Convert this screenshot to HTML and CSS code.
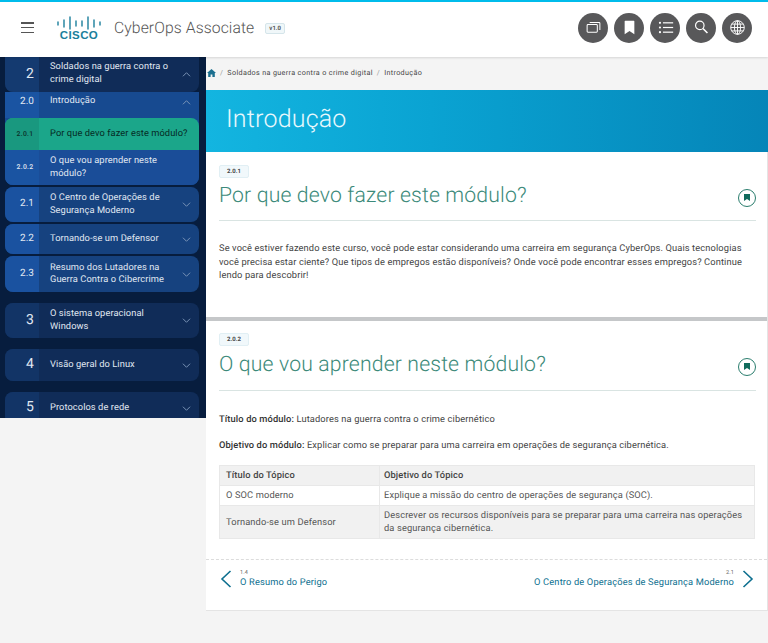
FILE: index.html
```html
<!DOCTYPE html>
<html lang="pt">
<head>
<meta charset="utf-8">
<title>CyberOps Associate</title>
<link rel="stylesheet" href="styles.css">
</head>
<body>
<header class="topbar">
  <button class="burger" aria-label="Menu"><span></span><span></span><span></span></button>
  <div class="logo">
    <svg class="logo-bars" width="44" height="14" viewBox="0 0 44 14"><g stroke="#1b7f9c" stroke-width="1.4" stroke-linecap="round"><path d="M1 6v3M7 4v7M13 1v12M19 5v5M25 5v5M31 1v12M37 4v7M43 6v3"/></g></svg>
    <span class="logo-text">CISCO</span>
  </div>
  <div class="course">CyberOps Associate</div>
  <span class="version">v1.0</span>
  <nav class="tools">
    <a class="tool"><svg width="20" height="20" viewBox="0 0 20 20" fill="none" stroke="#fff" stroke-width="1.2"><rect x="2.5" y="6.5" width="12" height="9" rx="1"/><path d="M5.5 4h11a1 1 0 0 1 1 1v8"/></svg></a>
    <a class="tool"><svg width="20" height="20" viewBox="0 0 20 20"><path fill="#fff" d="M5 2h10a.7.7 0 0 1 .7.7V18L10 14l-5.7 4V2.700A.7.7 0 0 1 5 2z"/></svg></a>
    <a class="tool"><svg width="20" height="20" viewBox="0 0 20 20" fill="#fff"><circle cx="3.500" cy="4.500" r="1.300"/><circle cx="3.500" cy="10" r="1.300"/><circle cx="3.500" cy="15.500" r="1.300"/><rect x="7" y="3.800" width="12" height="1.400"/><rect x="7" y="9.300" width="12" height="1.400"/><rect x="7" y="14.800" width="12" height="1.400"/></svg></a>
    <a class="tool"><svg width="20" height="20" viewBox="0 0 20 20" fill="none" stroke="#fff" stroke-width="1.400"><circle cx="8" cy="7.500" r="5"/><path d="M11.700 11.200 17 16.500" stroke-width="1.800"/></svg></a>
    <a class="tool"><svg width="20" height="20" viewBox="0 0 20 20" fill="none" stroke="#fff" stroke-width="1.100"><circle cx="10" cy="10" r="8"/><ellipse cx="10" cy="10" rx="3.600" ry="8"/><path d="M10 2v16M2 10h16M3.200 6h13.600M3.200 14h13.600"/></svg></a>
  </nav>
</header>

<div class="page">
  <aside class="sidebar">
    <div class="row module open-module">
      <div class="num big">2</div>
      <div class="label">Soldados na guerra contra o crime digital</div>
      <svg class="chev" width="9" height="5" viewBox="0 0 12 7"><path d="M1 6l5-5 5 5"/></svg>
    </div>
    <div class="topic-open">
      <div class="row topic-head">
        <div class="num">2.0</div>
        <div class="label">Introdução</div>
        <svg class="chev" width="9" height="5" viewBox="0 0 12 7"><path d="M1 6l5-5 5 5"/></svg>
      </div>
      <div class="row leaf active">
        <div class="num tiny">2.0.1</div>
        <div class="label">Por que devo fazer este módulo?</div>
      </div>
      <div class="row leaf">
        <div class="num tiny">2.0.2</div>
        <div class="label">O que vou aprender neste módulo?</div>
      </div>
    </div>
    <div class="row topic h35">
      <div class="num">2.1</div>
      <div class="label">O Centro de Operações de Segurança Moderno</div>
      <svg class="chev" width="9" height="5" viewBox="0 0 12 7"><path d="M1 1l5 5 5-5"/></svg>
    </div>
    <div class="row topic h31">
      <div class="num">2.2</div>
      <div class="label">Tornando-se um Defensor</div>
      <svg class="chev" width="9" height="5" viewBox="0 0 12 7"><path d="M1 1l5 5 5-5"/></svg>
    </div>
    <div class="row topic h36">
      <div class="num">2.3</div>
      <div class="label">Resumo dos Lutadores na Guerra Contra o Cibercrime</div>
      <svg class="chev" width="9" height="5" viewBox="0 0 12 7"><path d="M1 1l5 5 5-5"/></svg>
    </div>
    <div class="row module h35 gap-top">
      <div class="num big">3</div>
      <div class="label">O sistema operacional Windows</div>
      <svg class="chev" width="9" height="5" viewBox="0 0 12 7"><path d="M1 1l5 5 5-5"/></svg>
    </div>
    <div class="row module h32 gap-top">
      <div class="num big">4</div>
      <div class="label">Visão geral do Linux</div>
      <svg class="chev" width="9" height="5" viewBox="0 0 12 7"><path d="M1 1l5 5 5-5"/></svg>
    </div>
    <div class="row module h32 gap-top">
      <div class="num big">5</div>
      <div class="label">Protocolos de rede</div>
      <svg class="chev" width="9" height="5" viewBox="0 0 12 7"><path d="M1 1l5 5 5-5"/></svg>
    </div>
  </aside>

  <main class="main">
    <div class="crumbs">
      <svg width="9" height="8" viewBox="0 0 9 8"><path fill="#1b6f8f" d="M4.500 0 9 4H7.800v4H5.400V5.500H3.600V8H1.200V4H0z"/></svg>
      <span class="sep">/</span><span>Soldados na guerra contra o crime digital</span><span class="sep">/</span><span>Introdução</span>
    </div>
    <div class="banner"><h1>Introdução</h1></div>
    <div class="content">
      <section class="block first">
        <span class="badge">2.0.1</span>
        <div class="head">
          <h2>Por que devo fazer este módulo?</h2>
          <span class="mark"><svg width="6" height="7" viewBox="0 0 7 8"><path fill="#0f6b5c" d="M0 0h7v8L3.500 5.700 0 8z"/></svg></span>
        </div>
        <p class="txt">Se você estiver fazendo este curso, você pode estar considerando uma carreira em segurança CyberOps. Quais tecnologias você precisa estar ciente? Que tipos de empregos estão disponíveis? Onde você pode encontrar esses empregos? Continue lendo para descobrir!</p>
      </section>
      <section class="block second">
        <span class="badge">2.0.2</span>
        <div class="head">
          <h2>O que vou aprender neste módulo?</h2>
          <span class="mark"><svg width="6" height="7" viewBox="0 0 7 8"><path fill="#0f6b5c" d="M0 0h7v8L3.500 5.700 0 8z"/></svg></span>
        </div>
        <p class="txt line"><b>Título do módulo:</b> Lutadores na guerra contra o crime cibernético</p>
        <p class="txt line"><b>Objetivo do módulo:</b> Explicar como se preparar para uma carreira em operações de segurança cibernética.</p>
        <table class="topics">
          <tr class="shade"><th>Título do Tópico</th><th>Objetivo do Tópico</th></tr>
          <tr><td>O SOC moderno</td><td>Explique a missão do centro de operações de segurança (SOC).</td></tr>
          <tr class="shade"><td>Tornando-se um Defensor</td><td>Descrever os recursos disponíveis para se preparar para uma carreira nas operações da segurança cibernética.</td></tr>
        </table>
      </section>
      <footer class="pager">
        <a class="prev">
          <svg width="12" height="18" viewBox="0 0 12 18"><path d="M10.500 1 2 9l8.500 8"/></svg>
          <span><small>1.4</small>O Resumo do Perigo</span>
        </a>
        <a class="next">
          <span><small>2.1</small>O Centro de Operações de Segurança Moderno</span>
          <svg width="12" height="18" viewBox="0 0 12 18"><path d="M1.500 1 10 9l-8.500 8"/></svg>
        </a>
      </footer>
    </div>
  </main>
</div>
</body>
</html>
```
FILE: styles.css
```css
* { box-sizing: border-box; }
html, body { margin: 0; padding: 0; }
body {
  width: 768px;
  height: 643px;
  overflow: hidden;
  background: #f4f4f4;
  font-family: Roboto, "Liberation Sans", sans-serif;
  color: #444;
  text-rendering: geometricPrecision;
}
.topbar {
  height: 57px;
  background: #fff;
  border-top: 2px solid #00bceb;
  padding-bottom: 4px;
  display: flex;
  align-items: center;
  box-shadow: 0 1px 2px rgba(0,0,0,.12);
  position: relative;
}
.burger {
  width: 13px;
  height: 11px;
  margin-left: 21px;
  padding: 0;
  border: 0;
  background: none;
  display: flex;
  flex-direction: column;
  justify-content: space-between;
}
.burger span { display: block; height: 1.500px; background: #555; }
.logo { margin-left: 23px; width: 44px; display: flex; flex-direction: column; align-items: center; margin-top: 3px; }
.logo-bars { display: block; }
.logo-text {
  font-family: "Liberation Sans", sans-serif;
  font-weight: 700;
  font-size: 11.500px;
  line-height: 12px;
  letter-spacing: .4px;
  color: #1b7f9c;
}
.course { margin-left: 13px; font-size: 15.700px; font-weight: 300; color: #555; letter-spacing: .1px; }
.version {
  margin-left: 11px;
  margin-top: 2px;
  font-size: 6px;
  font-weight: 700;
  padding: 1px 3px;
  border: 1px solid #d5e5ea;
  background: #f0f7f9;
  border-radius: 2px;
  color: #555;
}
.tools { margin-left: auto; margin-right: 16px; display: flex; gap: 6px; }
.tool {
  width: 30px;
  height: 30px;
  border-radius: 50%;
  background: #58585a;
  display: flex;
  align-items: center;
  justify-content: center;
}
.tool svg { width: 17px; height: 17px; }

.page { display: grid; grid-template-columns: 206px 1fr; align-items: start; }

.sidebar {
  height: 361px;
  overflow: hidden;
  background: #071d3e;
  border-right: 1px solid #071d3e;
  padding: 0 6px 0 5px;
  display: flex;
  flex-direction: column;
  align-items: stretch;
}
.row {
  flex: none;
  display: flex;
  align-items: center;
  font-size: 9.300px;
  line-height: 12.500px;
  letter-spacing: .07px;
  color: #e0e8f2;
  overflow: hidden;
}
.num {
  flex: none;
  width: 34px;
  align-self: stretch;
  display: flex;
  align-items: center;
  justify-content: center;
  font-size: 10px;
  padding-left: 10px;
}
.num.big { font-size: 14px; padding-left: 16px; padding-bottom: 1px; font-weight: 400; }
.num.tiny { font-size: 6.800px; font-weight: 500; letter-spacing: .3px; padding-left: 6px; }
.label { flex: 1; padding: 0 4px 0 11px; }
.chev { flex: none; margin-right: 8px; fill: none; stroke: #7f99bb; stroke-width: 1.300; }

.module { background: #102c58; border-radius: 8px; }
.module .num { background: #123466; }
.open-module { height: 35px; border-radius: 0 0 8px 8px; }
.open-module .num { background: #143a70; }
.open-module .label { padding-bottom: 2px; }
.gap-top { margin-top: 11px; }

.topic-open { flex: none; background: #174a90; border-radius: 0 0 8px 8px; overflow: hidden; }
.topic-head { height: 26px; align-items: flex-start; padding-top: 3px; }
.topic-head .num { background: #1a54a2; margin-top: -3px; align-items: flex-start; padding-top: 4px; }
.topic-head .chev { margin-top: 5px; }
.leaf { height: 35px; background: #1a4d98; }
.leaf .num { background: #1a54a2; }
.leaf .label { padding-right: 10px; }
.leaf.active { height: 32px; background: #1ba68a; border-radius: 8px 8px 0 0; color: #062a24; }
.leaf.active .num { background: #19987f; color: #0b2d28; }

.topic { background: #16427f; margin-top: 2px; border-radius: 8px; }
.topic .num { background: #1a52a0; }
.h35 { height: 35px; }
.h31 { height: 30px; }
.h32 { height: 32px; }
.h36 { height: 36px; }

.main { min-width: 0; }
.crumbs {
  height: 33px;
  display: flex;
  align-items: center;
  font-size: 7.200px;
  font-weight: 400;
  letter-spacing: .35px;
  color: #444;
  padding: 0 0 2px 1px;
}
.sep { margin: 0 4px; color: #999; font-weight: 400; }
.banner {
  height: 62px;
  background: linear-gradient(90deg, #13b5e0 0%, #0aa3d2 40%, #0585b8 100%);
  display: flex;
  align-items: center;
  padding: 0 0 4px 20px;
}
.banner h1 { margin: 0; font-size: 25px; font-weight: 300; color: #e8f8fd; letter-spacing: .2px; }
.content {
  background: #fff;
  border-bottom: 1px solid #e4e4e4;
  border-right: 1px solid #e4e4e4;
}
.block { padding: 0 11px 0 13px; }
.first { height: 169px; padding-top: 13px; border-bottom: 4px solid #c5c7c9; }
.second { height: 238px; padding-top: 12px; }
.second .head { height: 45px; }
.badge {
  display: block;
  width: 30px;
  height: 13px;
  font-size: 6px;
  font-weight: 700;
  line-height: 12px;
  text-align: center;
  color: #444;
  background: #f1f8fb;
  border: 1px solid #e1eff4;
  border-radius: 2px;
}
.head {
  display: flex;
  align-items: center;
  justify-content: space-between;
  height: 43px;
  border-bottom: 1px solid #d9e4e2;
  padding-bottom: 8px;
}
.head h2 { margin: 0; font-size: 21.200px; font-weight: 300; color: #3c8a7a; letter-spacing: .15px; }
.mark {
  width: 18px;
  height: 18px;
  border: 1px solid #2a7d6d;
  border-radius: 50%;
  display: flex;
  align-items: center;
  justify-content: center;
  margin-top: 5px;
}
.txt { margin: 21px 9px 0 0; font-size: 9.300px; line-height: 13.500px; color: #444; letter-spacing: .12px; }
.line { margin-top: 22px; }
.line + .line { margin-top: 12px; }
.txt b { font-weight: 500; color: #333; }
.topics {
  margin-top: 13px;
  width: 536px;
  border-collapse: collapse;
  font-size: 9.300px;
  line-height: 13px;
  letter-spacing: .12px;
  color: #555;
}
.topics th, .topics td {
  text-align: left;
  font-weight: 400;
  padding: 3px 4px;
  border: 1px solid #e8e8e8;
}
.topics th { font-weight: 500; color: #444; height: 20px; }
.topics td { height: 20px; }
.topics tr:last-child td { height: 33px; }
.topics th:first-child, .topics td:first-child { width: 160px; padding-left: 6px; }
.shade { background: #f1f1f1; }
.pager {
  height: 51px;
  border-top: 1px dashed #dcdcdc;
  display: flex;
  justify-content: space-between;
  align-items: flex-start;
  padding: 10px 13px 0 14px;
  font-size: 9.300px;
  letter-spacing: .15px;
  color: #0d6f8f;
}
.pager a { display: flex; align-items: center; gap: 8px; }
.pager small { display: block; font-size: 5.500px; line-height: 7px; color: #666; }
.next { text-align: right; }
.pager svg { fill: none; stroke: #0d6f8f; stroke-width: 1.600; }
```
